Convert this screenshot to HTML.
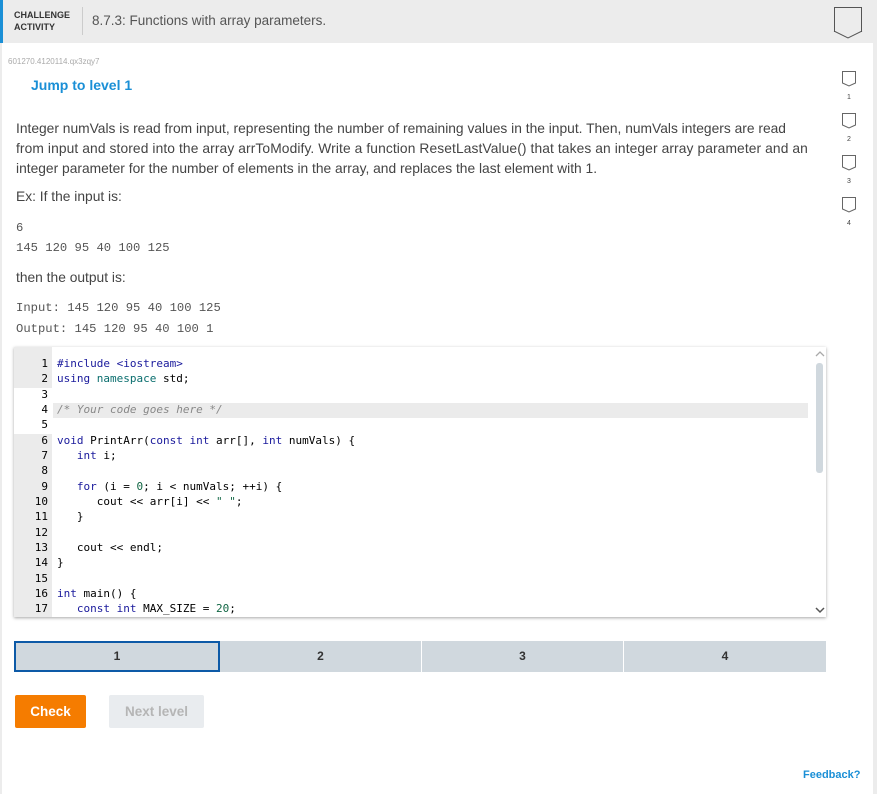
<!DOCTYPE html>
<html><head><meta charset="utf-8">
<style>
*{margin:0;padding:0;box-sizing:border-box}
body{width:877px;height:794px;background:#fff;position:relative;overflow:hidden;font-family:"Liberation Sans",sans-serif;color:#333}
.abs{position:absolute}
.hdr{left:0;top:0;width:877px;height:43px;background:#ececec;border-left:3px solid #1a8fd6}
.lbl{left:14px;top:9px;font-size:9px;font-weight:bold;line-height:12px;color:#333}
.sep{left:82px;top:7px;width:1px;height:28px;background:#ccc}
.ttl{left:92px;top:13px;font-size:13.5px;color:#555}
.shield{position:absolute;border:1px solid #666;border-bottom:none}
.leftbar{left:0;top:43px;width:2px;height:751px;background:#ececec}
.rightbar{left:873px;top:43px;width:4px;height:751px;background:#ececec}
.p{left:16px;font-size:13.8px;line-height:20px;color:#444;white-space:nowrap}
.mono{font-family:"Liberation Mono",monospace;font-size:12.2px;color:#555;left:16px}
.code{left:14px;top:347px;width:812px;height:270px;background:#fff;box-shadow:0 1px 3px rgba(0,0,0,.35);overflow:hidden}
.gut{position:absolute;left:0;top:0;width:38px;height:270px;background:#ebebeb}
.ln{position:absolute;left:0;width:38px;text-align:right;padding-right:4px;font-family:"DejaVu Sans Mono",monospace;font-size:11px;color:#000}
.cl{position:absolute;left:43px;font-family:"DejaVu Sans Mono",monospace;font-size:11px;color:#000;white-space:pre}
.k{color:#1a1a9c}.t{color:#0a6e6e}.n{color:#116644}.c{color:#888;font-style:italic}
.seg{position:absolute;top:641px;height:31px;background:#d0d8de;text-align:center;font-size:12px;font-weight:bold;line-height:31px;color:#333}
</style></head><body>
<div class="abs hdr"></div>
<div class="abs lbl">CHALLENGE<br>ACTIVITY</div>
<div class="abs sep"></div>
<div class="abs ttl">8.7.3: Functions with array parameters.</div>
<div class="shield" style="left:834px;top:7px;width:28px;height:25px;border-color:#555"></div>
<svg class="abs" style="left:833px;top:31px" width="30" height="9"><path d="M1 0 L15 7 L29 0" fill="none" stroke="#555" stroke-width="1"/></svg>
<div class="abs leftbar"></div>
<div class="abs rightbar"></div>
<div class="abs" style="left:8px;top:57px;font-size:8px;color:#aaa">601270.4120114.qx3zqy7</div>
<div class="abs" style="left:31px;top:77px;font-size:14px;font-weight:bold;color:#1a8fd6">Jump to level 1</div>

<svg class="abs" style="left:838px;top:68px" width="24" height="170">
<g fill="none" stroke="#666" stroke-width="1">
<path d="M4.5 3.5 H17.5 V15 L11 18 L4.5 15 Z"/>
<path d="M4.5 45.5 H17.5 V57 L11 60 L4.5 57 Z"/>
<path d="M4.5 87.5 H17.5 V99 L11 102 L4.5 99 Z"/>
<path d="M4.5 129.5 H17.5 V141 L11 144 L4.5 141 Z"/>
</g>
<g font-size="7" fill="#444" text-anchor="middle" font-family="Liberation Sans">
<text x="11" y="31">1</text><text x="11" y="73">2</text><text x="11" y="115">3</text><text x="11" y="157">4</text></g>
</svg>

<div class="abs p" style="top:119px">Integer numVals is read from input, representing the number of remaining values in the input. Then, numVals integers are read<br><span style="letter-spacing:0.1px">from input and stored into the array arrToModify. Write a function ResetLastValue() that takes an integer array parameter and an</span><br>integer parameter for the number of elements in the array, and replaces the last element with 1.</div>
<div class="abs p" style="top:187px">Ex: If the input is:</div>
<div class="abs mono" style="top:221px">6</div>
<div class="abs mono" style="top:241px">145 120 95 40 100 125</div>
<div class="abs p" style="top:268px">then the output is:</div>
<div class="abs mono" style="top:301px">Input: 145 120 95 40 100 125</div>
<div class="abs mono" style="top:322px">Output: 145 120 95 40 100 1</div>

<div class="abs code">
<div class="gut"></div>
<div style="position:absolute;left:0;top:41px;width:38px;height:46px;background:#fff"></div>
<div style="position:absolute;left:39px;top:56px;width:755px;height:15px;background:#ebebeb"></div>
<div style="position:absolute;left:802px;top:16px;width:7px;height:110px;background:#d0d8de;border-radius:3px"></div>
<svg style="position:absolute;left:801px;top:3px" width="10" height="8"><path d="M1 6 L5 2 L9 6" fill="none" stroke="#aaa" stroke-width="1.3"/></svg>
<svg style="position:absolute;left:801px;top:259px" width="10" height="8"><path d="M1 2 L5 6 L9 2" fill="none" stroke="#555" stroke-width="1.5"/></svg>
<div class="ln" style="top:10px">1</div><div class="cl" style="top:10px"><span class="k">#include</span> <span class="k">&lt;iostream&gt;</span></div>
<div class="ln" style="top:25px">2</div><div class="cl" style="top:25px"><span class="k">using</span> <span class="t">namespace</span> std;</div>
<div class="ln" style="top:41px">3</div>
<div class="ln" style="top:56px">4</div><div class="cl c" style="top:56px">/* Your code goes here */</div>
<div class="ln" style="top:71px">5</div>
<div class="ln" style="top:87px">6</div><div class="cl" style="top:87px"><span class="k">void</span> PrintArr(<span class="k">const</span> <span class="k">int</span> arr[], <span class="k">int</span> numVals) {</div>
<div class="ln" style="top:102px">7</div><div class="cl" style="top:102px">   <span class="k">int</span> i;</div>
<div class="ln" style="top:117px">8</div>
<div class="ln" style="top:133px">9</div><div class="cl" style="top:133px">   <span class="k">for</span> (i = <span class="n">0</span>; i &lt; numVals; ++i) {</div>
<div class="ln" style="top:148px">10</div><div class="cl" style="top:148px">      cout &lt;&lt; arr[i] &lt;&lt; <span class="n">" "</span>;</div>
<div class="ln" style="top:163px">11</div><div class="cl" style="top:163px">   }</div>
<div class="ln" style="top:179px">12</div>
<div class="ln" style="top:194px">13</div><div class="cl" style="top:194px">   cout &lt;&lt; endl;</div>
<div class="ln" style="top:209px">14</div><div class="cl" style="top:209px">}</div>
<div class="ln" style="top:225px">15</div>
<div class="ln" style="top:240px">16</div><div class="cl" style="top:240px"><span class="k">int</span> main() {</div>
<div class="ln" style="top:255px">17</div><div class="cl" style="top:255px">   <span class="k">const</span> <span class="k">int</span> MAX_SIZE = <span class="n">20</span>;</div>
</div>

<div class="seg" style="left:14px;width:206px;border:2px solid #0d5aa7;line-height:27px">1</div>
<div class="seg" style="left:220px;width:201px">2</div>
<div class="seg" style="left:422px;width:201px">3</div>
<div class="seg" style="left:624px;width:202px">4</div>

<div class="abs" style="left:15px;top:695px;width:71px;height:33px;background:#f57c00;border-radius:2px;color:#fff;font-weight:bold;font-size:13.5px;text-align:center;line-height:33px">Check</div>
<div class="abs" style="left:109px;top:695px;width:95px;height:33px;background:#e9ecef;border-radius:2px;color:#b5b5b5;font-weight:bold;font-size:13.5px;text-align:center;line-height:33px">Next level</div>
<div class="abs" style="left:803px;top:769px;font-size:11px;font-weight:bold;color:#1a8fd6">Feedback?</div>
</body></html>
